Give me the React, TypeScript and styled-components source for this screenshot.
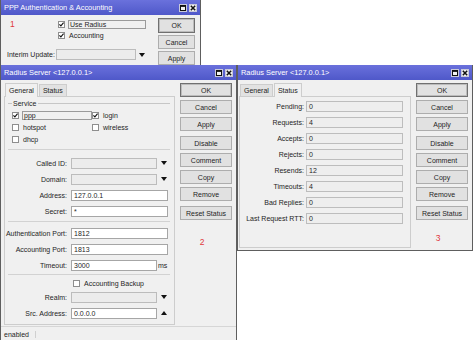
import React from 'react'
import styled, { createGlobalStyle } from 'styled-components'

const GlobalStyle = createGlobalStyle`
    html, body {
        margin: 0;
        padding: 0;
        background: #ffffff;
    }
    body {
        font-family: "Liberation Sans", Arial, sans-serif;
    }
`

// small drawings used across the windows
const CheckMark = () => (
    <svg width="5" height="5" viewBox="0 0 5 5">
        <path d="M0.4 2.4 L1.9 3.9 L4.6 0.7" stroke="#111" strokeWidth="1.1" fill="none" />
    </svg>
)

const MaxIcon = () => (
    <svg width="6" height="6" viewBox="0 0 6 6">
        <rect x="0.5" y="0.5" width="5" height="5" fill="none" stroke="#111" />
        <line x1="0" y1="1.3" x2="6" y2="1.3" stroke="#111" strokeWidth="1.2" />
    </svg>
)

const CloseIcon = () => (
    <svg width="6" height="6" viewBox="0 0 6 6">
        <path d="M0.8 0.8 L5.2 5.2 M5.2 0.8 L0.8 5.2" stroke="#111" strokeWidth="1.5" />
    </svg>
)

const Arrow = ({ up }: { up?: boolean }) => (
    <svg width="6" height="4" viewBox="0 0 6 4">
        <path d={up ? 'M0 4 H6 L3 0 Z' : 'M0 0 H6 L3 4 Z'} fill="#111" />
    </svg>
)

interface CheckProps {
    label: string
    checked?: boolean
    focused?: boolean
}

const Check = ({ label, checked, focused }: CheckProps) => (
    <CheckItem>
        <Box>{checked && <CheckMark />}</Box>
        <CheckLabel $focused={focused}>{label}</CheckLabel>
    </CheckItem>
)

const TitleButtons = () => (
    <TitleBtnGroup>
        <TitleBtn><MaxIcon /></TitleBtn>
        <TitleBtn><CloseIcon /></TitleBtn>
    </TitleBtnGroup>
)

const w2Cols = '62px 86px 7px'
const w3Cols = '64px 97px'

const statusRows: [string, string][] = [
    ['Pending:', '0'],
    ['Requests:', '4'],
    ['Accepts:', '0'],
    ['Rejects:', '0'],
    ['Resends:', '12'],
    ['Timeouts:', '4'],
    ['Bad Replies:', '0'],
    ['Last Request RTT:', '0'],
]

const SideButtons = () => (
    <>
        <Btn $default>OK</Btn>
        <Btn>Cancel</Btn>
        <Btn>Apply</Btn>
        <Btn $gapBefore>Disable</Btn>
        <Btn>Comment</Btn>
        <Btn>Copy</Btn>
        <Btn>Remove</Btn>
        <Btn $gapBefore>Reset Status</Btn>
    </>
)

const App = () => {
    return (
        <Desktop>
            <GlobalStyle />

            {/* PPP Authentication & Accounting */}
            <Win $left={0} $top={0} $width={201} $height={76}>
                <TitleBar>
                    <span>PPP Authentication &amp; Accounting</span>
                    <TitleButtons />
                </TitleBar>
                <PppBody>
                    <PppForm>
                        <PppRow $h={12}>
                            <Note $align="left">1</Note>
                            <CheckSpan>
                                <Check label="Use Radius" checked focused />
                            </CheckSpan>
                        </PppRow>
                        <PppRow $h={10}>
                            <span />
                            <CheckSpan>
                                <Check label="Accounting" checked />
                            </CheckSpan>
                        </PppRow>
                        <PppRow $h={13} $mt={8}>
                            <Label $align="left">Interim Update:</Label>
                            <Field $tone="grey" />
                            <Arrow />
                        </PppRow>
                    </PppForm>
                    <ButtonColumn $width={37} $gap={2}>
                        <Btn $default $h={15}>OK</Btn>
                        <Btn>Cancel</Btn>
                        <Btn>Apply</Btn>
                    </ButtonColumn>
                </PppBody>
            </Win>

            {/* Radius Server - General */}
            <Win $left={0} $top={65} $width={237} $height={276}>
                <TitleBar>
                    <span>Radius Server &lt;127.0.0.1&gt;</span>
                    <TitleButtons />
                </TitleBar>
                <WinBody $padLeft={3}>
                    <TabArea>
                        <TabStrip>
                            <Tab $active>General</Tab>
                            <Tab>Status</Tab>
                        </TabStrip>
                        <Panel $width={171} $height={229}>
                            <GroupHeader>Service</GroupHeader>
                            <CheckGrid>
                                <Check label="ppp" checked focused />
                                <Check label="login" checked />
                                <Check label="hotspot" />
                                <Check label="wireless" />
                                <Check label="dhcp" />
                            </CheckGrid>
                            <Separator $mt={4} $mb={5} />
                            <FieldRow $cols={w2Cols}>
                                <Label>Called ID:</Label>
                                <Field $tone="grey" />
                                <Arrow />
                            </FieldRow>
                            <FieldRow $cols={w2Cols}>
                                <Label>Domain:</Label>
                                <Field $tone="grey" />
                                <Arrow />
                            </FieldRow>
                            <FieldRow $cols={w2Cols}>
                                <Label>Address:</Label>
                                <Field $span={2}>127.0.0.1</Field>
                            </FieldRow>
                            <FieldRow $cols={w2Cols}>
                                <Label>Secret:</Label>
                                <Field $span={2}>*</Field>
                            </FieldRow>
                            <Separator $mt={2} $mb={3} />
                            <FieldRow $cols={w2Cols}>
                                <Label>Authentication Port:</Label>
                                <Field $span={2}>1812</Field>
                            </FieldRow>
                            <FieldRow $cols={w2Cols}>
                                <Label>Accounting Port:</Label>
                                <Field $span={2}>1813</Field>
                            </FieldRow>
                            <FieldRow $cols={w2Cols}>
                                <Label>Timeout:</Label>
                                <Field>3000</Field>
                                <Unit>ms</Unit>
                            </FieldRow>
                            <Separator $mt={1} $mb={2} />
                            <FieldRow $cols={w2Cols} $h={12}>
                                <span />
                                <CheckSpan>
                                    <Check label="Accounting Backup" />
                                </CheckSpan>
                            </FieldRow>
                            <FieldRow $cols={w2Cols}>
                                <Label>Realm:</Label>
                                <Field $tone="grey" />
                                <Arrow />
                            </FieldRow>
                            <FieldRow $cols={w2Cols}>
                                <Label>Src. Address:</Label>
                                <Field>0.0.0.0</Field>
                                <Arrow up />
                            </FieldRow>
                        </Panel>
                    </TabArea>
                    <ButtonColumn $width={52} $gap={3}>
                        <SideButtons />
                        <Note $mt={14}>2</Note>
                    </ButtonColumn>
                </WinBody>
                <StatusBar>
                    <StatusCell>enabled</StatusCell>
                </StatusBar>
            </Win>

            {/* Radius Server - Status */}
            <Win $left={237} $top={65} $width={236} $height={186}>
                <TitleBar>
                    <span>Radius Server &lt;127.0.0.1&gt;</span>
                    <TitleButtons />
                </TitleBar>
                <WinBody $padLeft={1}>
                    <TabArea>
                        <TabStrip>
                            <Tab>General</Tab>
                            <Tab $active>Status</Tab>
                        </TabStrip>
                        <Panel $width={172} $height={152}>
                            {statusRows.map(([label, value]) => (
                                <FieldRow key={label} $cols={w3Cols} $gap={2}>
                                    <Label>{label}</Label>
                                    <Field $tone="readonly">{value}</Field>
                                </FieldRow>
                            ))}
                        </Panel>
                    </TabArea>
                    <ButtonColumn $width={52} $gap={3}>
                        <SideButtons />
                        <Note $mt={10}>3</Note>
                    </ButtonColumn>
                </WinBody>
            </Win>
        </Desktop>
    )
}

const Desktop = styled.div`
    position: relative;
    width: 474px;
    height: 340px;
    overflow: hidden;
    background: #ffffff;
    font-family: "Liberation Sans", Arial, sans-serif;
    font-size: 7px;
    color: #1e1e1e;
`

const Win = styled.div<{ $left: number; $top: number; $width: number; $height: number }>`
    position: absolute;
    left: ${({ $left }) => $left}px;
    top: ${({ $top }) => $top}px;
    width: ${({ $width }) => $width}px;
    height: ${({ $height }) => $height}px;
    box-sizing: border-box;
    border: 1px solid #5e5e5e;
    border-top: none;
    background: #f0f0f0;
    display: flex;
    flex-direction: column;
    overflow: hidden;
`

const TitleBar = styled.div`
    flex: none;
    height: 15px;
    display: flex;
    align-items: center;
    justify-content: space-between;
    padding: 0 3px 0 3px;
    background: linear-gradient(to bottom, #6a71dc, #4f58c9);
    color: #ffffff;
    font-size: 7.4px;
    white-space: nowrap;
`

const TitleBtnGroup = styled.div`
    display: flex;
    gap: 2px;
`

const TitleBtn = styled.div`
    width: 8px;
    height: 8px;
    box-sizing: border-box;
    background: #f3f3f3;
    border: 1px solid #c9c9d9;
    display: flex;
    align-items: center;
    justify-content: center;
`

const PppBody = styled.div`
    display: flex;
    justify-content: space-between;
    padding: 3px 5px 0 6px;
`

const PppForm = styled.div`
    display: flex;
    flex-direction: column;
    padding-top: 0;
`

const PppRow = styled.div<{ $h: number; $mt?: number }>`
    display: grid;
    grid-template-columns: 46px 80px 7px;
    column-gap: 3px;
    align-items: center;
    height: ${({ $h }) => $h}px;
    margin-top: ${({ $mt }) => $mt ?? 0}px;
`

const CheckSpan = styled.div`
    grid-column: 2 / span 2;
    padding-left: 2px;
`

const WinBody = styled.div<{ $padLeft: number }>`
    flex: none;
    display: flex;
    gap: 5px;
    padding: 3px 0 0 ${({ $padLeft }) => $padLeft}px;
`

const TabArea = styled.div`
    display: flex;
    flex-direction: column;
`

const TabStrip = styled.div`
    display: flex;
    align-items: flex-end;
    height: 13px;
    padding-left: 1px;
`

const Tab = styled.div<{ $active?: boolean }>`
    position: relative;
    z-index: ${({ $active }) => ($active ? 1 : 0)};
    height: ${({ $active }) => ($active ? 14 : 12)}px;
    margin-bottom: ${({ $active }) => ($active ? -1 : 0)}px;
    box-sizing: border-box;
    padding: 0 3px 1px;
    display: flex;
    align-items: center;
    border: 1px solid #cdcdcd;
    border-bottom: none;
    background: ${({ $active }) => ($active ? '#f0f0f0' : '#e2e2e2')};
    margin-right: 1px;
`

const Panel = styled.div<{ $width: number; $height: number }>`
    width: ${({ $width }) => $width}px;
    height: ${({ $height }) => $height}px;
    box-sizing: border-box;
    border: 1px solid #cdcdcd;
    background: #f0f0f0;
    display: flex;
    flex-direction: column;
    padding-top: 1px;
`

const GroupHeader = styled.div`
    display: flex;
    align-items: center;
    gap: 1px;
    height: 10px;
    padding: 0 4px 0 3px;
    &::before {
        content: '';
        width: 4px;
        border-top: 1px solid #c6c6c6;
    }
    &::after {
        content: '';
        flex: 1;
        margin-left: 1px;
        border-top: 1px solid #c6c6c6;
    }
`

const CheckGrid = styled.div`
    display: grid;
    grid-template-columns: 80px 1fr;
    grid-auto-rows: 12px;
    align-items: center;
    padding-left: 7px;
    margin-top: 1px;
`

const CheckItem = styled.div`
    display: flex;
    align-items: center;
    gap: 4px;
`

const Box = styled.span`
    flex: none;
    width: 7px;
    height: 7px;
    box-sizing: border-box;
    border: 1px solid #8e8e8e;
    background: #ffffff;
    display: flex;
    align-items: center;
    justify-content: center;
`

const CheckLabel = styled.span<{ $focused?: boolean }>`
    white-space: nowrap;
    ${({ $focused }) => $focused && `
        flex: 1;
        height: 9px;
        line-height: 7px;
        box-sizing: border-box;
        margin-left: -1px;
        padding-left: 1px;
        border: 1px solid #9a9a9a;
    `}
`

const Separator = styled.div<{ $mt: number; $mb: number }>`
    flex: none;
    height: 0;
    border-top: 1px solid #d2d2d2;
    margin: ${({ $mt }) => $mt}px 4px ${({ $mb }) => $mb}px 3px;
`

const FieldRow = styled.div<{ $cols: string; $gap?: number; $h?: number }>`
    flex: none;
    display: grid;
    grid-template-columns: ${({ $cols }) => $cols};
    column-gap: ${({ $gap }) => $gap ?? 4}px;
    align-items: center;
    height: ${({ $h }) => $h ?? 16}px;
`

const Label = styled.span<{ $align?: 'left' | 'right' }>`
    text-align: ${({ $align }) => $align ?? 'right'};
    white-space: nowrap;
`

const fieldColors = {
    white: { bg: '#ffffff', border: '#a6a6a6' },
    grey: { bg: '#ececec', border: '#bcbcbc' },
    readonly: { bg: '#eeeeee', border: '#bdbdbd' },
}

const Field = styled.div<{ $tone?: 'white' | 'grey' | 'readonly'; $span?: number }>`
    grid-column: span ${({ $span }) => $span ?? 1};
    height: 11px;
    box-sizing: border-box;
    padding-left: 2px;
    display: flex;
    align-items: center;
    white-space: nowrap;
    overflow: hidden;
    background: ${({ $tone }) => fieldColors[$tone ?? 'white'].bg};
    border: 1px solid ${({ $tone }) => fieldColors[$tone ?? 'white'].border};
`

const Unit = styled.span`
    margin-left: -3px;
    white-space: nowrap;
`

const ButtonColumn = styled.div<{ $width: number; $gap: number }>`
    flex: none;
    width: ${({ $width }) => $width}px;
    display: flex;
    flex-direction: column;
    gap: ${({ $gap }) => $gap}px;
`

const Btn = styled.button<{ $default?: boolean; $gapBefore?: boolean; $h?: number }>`
    height: ${({ $h }) => $h ?? 14}px;
    box-sizing: border-box;
    padding: 0;
    margin: ${({ $gapBefore }) => ($gapBefore ? 2 : 0)}px 0 0;
    font-family: inherit;
    font-size: 7px;
    color: #1e1e1e;
    background: #e1e1e1;
    border: 1px solid ${({ $default }) => ($default ? '#707070' : '#adadad')};
    ${({ $default }) => $default && 'box-shadow: inset 0 0 0 1px #bcbcbc;'}
`

const Note = styled.div<{ $mt?: number; $align?: 'left' | 'center' }>`
    margin-top: ${({ $mt }) => $mt ?? 0}px;
    text-align: ${({ $align }) => $align ?? 'center'};
    padding: ${({ $align }) => ($align === 'left' ? '0 0 0 3px' : '0 8px 0 0')};
    color: #e0363c;
    font-size: 8.5px;
`

const StatusBar = styled.div`
    flex: none;
    height: 14px;
    margin-top: 1px;
    border-top: 1px solid #d6d6d6;
    display: flex;
    align-items: center;
    padding-left: 2px;
`

const StatusCell = styled.span`
    padding: 0 6px 0 1px;
    border-right: 1px solid #d0d0d0;
`

export default App
